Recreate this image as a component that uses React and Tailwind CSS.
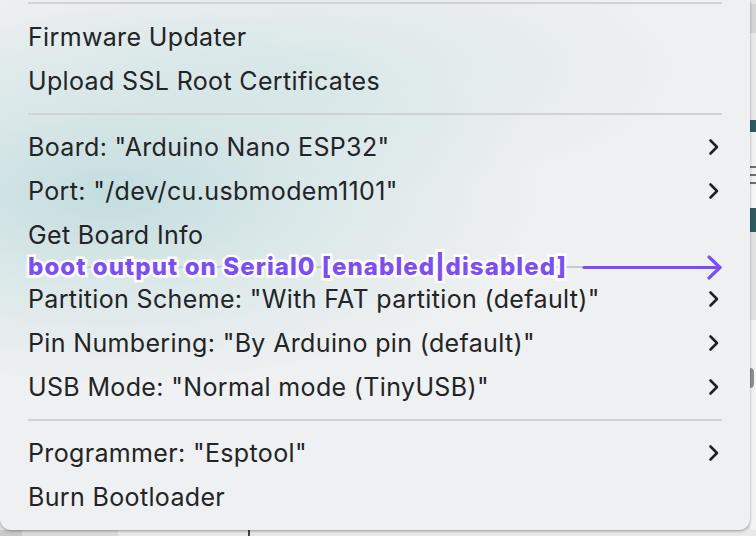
import React from 'react';

const Chevron = () => (
  <svg width="12" height="18" viewBox="0 0 12 18" fill="none" className="shrink-0">
    <path d="M2.5 2.5L9 9l-6.5 6.5" stroke="#1f2224" strokeWidth="2.6" strokeLinecap="round" strokeLinejoin="round" />
  </svg>
);

const Item = ({ label, sub }) => (
  <div className="flex h-[44px] items-center justify-between pl-[28px] pr-[30px]">
    <span className="text-[25px] leading-none tracking-[0.35px] text-[#222426]">{label}</span>
    {sub && <Chevron />}
  </div>
);

const Separator = () => (
  <div className="flex h-[22px] items-center px-[28px]">
    <div className="h-[2px] w-full bg-[#cfd3d4]" />
  </div>
);

const Annotation = () => (
  <div className="relative flex h-[20px] items-center pl-[28px] pr-[28px]">
    <div className="absolute left-[28px] right-[150px] top-[9px] h-[2px] bg-[#c8cccd]" />
    <span className="relative text-[24px] font-extrabold leading-none tracking-[1.08px] text-[#7b4dff] [-webkit-text-stroke:5px_white] [paint-order:stroke_fill]">
      boot output on Serial0 [enabled|disabled]
    </span>
    <svg width="144" height="28" viewBox="0 0 144 28" fill="none" className="relative ml-auto -mr-[3px]">
      <path d="M3 14.5H139" stroke="#7b4dff" strokeWidth="3.2" strokeLinecap="round" />
      <path d="M128 4l11 10.5L128 25" stroke="#7b4dff" strokeWidth="3.2" strokeLinecap="round" strokeLinejoin="round" />
    </svg>
  </div>
);

export default function App() {
  return (
    <div className="relative h-[536px] w-[756px] overflow-hidden bg-[#e4e4e4] font-['Inter','Noto_Sans',sans-serif]">
      {/* app window peeking out behind the menu */}
      <div className="flex h-[530px]">
        <div className="flex-1" />
        <div className="flex w-[6px] flex-col">
          <div className="h-[4px] bg-[#e5e5e5]" />
          <div className="h-[29px] bg-[#d6d6d6]" />
          <div className="h-[87px] bg-[#e9e9e9]" />
          <div className="h-[12px] bg-[#2f5b5e]" />
          <div className="h-[32px] bg-[#f2f2f2]" />
          <div className="flex h-[22px] flex-col justify-between bg-[#f2f2f2] py-[2px]">
            <div className="h-[2px] bg-[#6f6f6f]" />
            <div className="h-[2px] bg-[#6f6f6f]" />
            <div className="h-[2px] bg-[#6f6f6f]" />
          </div>
          <div className="h-[22px] bg-[#f6f6f6]" />
          <div className="h-[24px] bg-[#2f5b5e]" />
          <div className="h-[88px] bg-[#e2e2e2]" />
          <div className="flex h-[210px] flex-col bg-[#f3f3f3] pt-[48px]">
            <div className="h-[20px] w-[4px] rounded-r-full bg-[#8a9191]" />
          </div>
        </div>
      </div>
      <div className="flex h-[6px]">
        <div className="w-[22px] bg-[#c9c9c9]" />
        <div className="w-[96px] bg-[#dadada]" />
        <div className="w-[130px] bg-[#e8e8e8]" />
        <div className="w-[2px] bg-[#444]" />
        <div className="flex-1 bg-[#e8e8e8]" />
      </div>

      {/* the menu */}
      <div className="absolute left-0 top-0 h-[530px] w-[750px] rounded-b-[11px] bg-[#eef0f1] bg-[radial-gradient(ellipse_430px_190px_at_110px_195px,#c3dddf_0%,rgba(205,226,227,0.6)_45%,rgba(238,240,241,0)_100%),radial-gradient(ellipse_380px_130px_at_300px_70px,rgba(214,230,231,0.8),rgba(238,240,241,0)_100%)] shadow-[0_1px_3px_rgba(0,0,0,0.35)]">
        <div className="px-[28px] pt-[2px]">
          <div className="h-[2px] w-full bg-[#cfd3d4]" />
        </div>
        <div className="pt-[11px]">
          <Item label="Firmware Updater" />
          <Item label="Upload SSL Root Certificates" />
          <Separator />
          <Item label={'Board: "Arduino Nano ESP32"'} sub />
          <Item label={'Port: "/dev/cu.usbmodem1101"'} sub />
          <Item label="Get Board Info" />
          <Annotation />
          <Item label={'Partition Scheme: "With FAT partition (default)"'} sub />
          <Item label={'Pin Numbering: "By Arduino pin (default)"'} sub />
          <Item label={'USB Mode: "Normal mode (TinyUSB)"'} sub />
          <Separator />
          <Item label={'Programmer: "Esptool"'} sub />
          <Item label="Burn Bootloader" />
        </div>
      </div>
    </div>
  );
}
